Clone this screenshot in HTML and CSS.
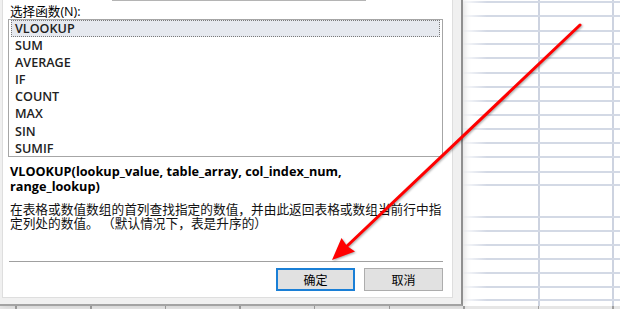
FILE: index.html
```html
<!DOCTYPE html>
<html lang="zh-CN">
<head>
  <meta charset="UTF-8">
  <title>插入函数</title>
  <link rel="stylesheet" href="styles.css">
</head>
<body>
  <div class="screen">
    <div class="top">
      <div class="dialog">
        <div class="panel">
          <div class="field-edge"></div>
          <div class="label">选择函数(N):</div>
          <ul class="listbox">
            <li class="item selected">VLOOKUP</li>
            <li class="item">SUM</li>
            <li class="item">AVERAGE</li>
            <li class="item">IF</li>
            <li class="item">COUNT</li>
            <li class="item">MAX</li>
            <li class="item">SIN</li>
            <li class="item">SUMIF</li>
          </ul>
          <div class="syntax">VLOOKUP(lookup_value, table_array, col_index_num, range_lookup)</div>
          <div class="desc">在表格或数值数组的首列查找指定的数值，并由此返回表格或数组当前行中指定列处的数值。 （默认情况下，表是升序的）</div>
          <div class="spacer"></div>
          <div class="separator"></div>
          <div class="buttons">
            <button class="btn default">确定</button>
            <button class="btn">取消</button>
          </div>
        </div>
      </div>

      <!-- worksheet behind the dialog -->
      <div class="sheet">
        <div class="row h3"></div>
        <div class="row h14"></div>
        <div class="row h15"></div>
        <div class="row h13"></div>
        <div class="row h14"></div>
        <div class="row h15"></div>
        <div class="row h14"></div>
        <div class="row h14"></div>
        <div class="row h14"></div>
        <div class="row h14"></div>
        <div class="row h14"></div>
        <div class="row h14"></div>
        <div class="row h15"></div>
        <div class="row h13"></div>
        <div class="row h32"></div>
        <div class="row h14"></div>
        <div class="row h14"></div>
        <div class="row h14"></div>
        <div class="row h14"></div>
        <div class="row h14"></div>
        <div class="row h13"></div>
      </div>
    </div>
    <div class="sheet-bottom"></div>

    <svg class="arrow" width="620" height="309" viewBox="0 0 620 309">
      <line x1="580" y1="25" x2="346" y2="247" stroke="#ff0000" stroke-width="3" stroke-linecap="round"/>
      <polygon points="332,260 341.5,238 347,246 355,251.5" fill="#ff0000"/>
    </svg>
  </div>
</body>
</html>
```

FILE: styles.css
```css
body {
  margin: 0;
  padding: 0;
  background: #ffffff;
  font-family: 'Open Sans', 'Noto Sans CJK SC', sans-serif;
  color: #000;
  overflow: hidden;
}

.screen {
  position: relative;
  width: 620px;
  height: 309px;
  display: flex;
  flex-direction: column;
}

.top {
  display: flex;
  height: 306px;
}

/* dialog frame */
.dialog {
  box-sizing: border-box;
  width: 463px;
  height: 306px;
  flex: none;
  background: #f0f0f0;
  border-right: 2px solid #8f8f8f;
  border-bottom: 2px solid #a3a3a3;
  padding: 0 8px 6px 2px;
  box-shadow: 2px 0 6px rgba(0, 0, 0, 0.12);
  z-index: 2;
}

.panel {
  box-sizing: border-box;
  height: 100%;
  background: #ffffff;
  border: 1px solid #dedede;
  border-top: none;
  padding: 0 9px 0 5px;
  display: flex;
  flex-direction: column;
}

.field-edge {
  height: 1px;
  width: 254px;
  margin-left: 104px;
  background: #b4b4b4;
}

.label {
  margin-top: 3px;
  height: 15px;
  line-height: 15px;
  font-size: 12.6px;
  padding-left: 2px;
}

.listbox {
  list-style: none;
  margin: 0;
  padding: 0 2px 0 2px;
  border: 1px solid #a6a6a6;
  height: 136px;
}

.item {
  box-sizing: border-box;
  height: 17.1px;
  line-height: 17px;
  font-size: 12.6px;
  font-weight: 600;
  padding-left: 4px;
  color: #222;
}

.item.selected {
  background: #e6e9ef;
  outline: 1px dotted #7a7a7a;
  outline-offset: -1px;
}

.syntax {
  margin-top: 7px;
  padding-left: 2px;
  font-size: 12.7px;
  font-weight: 700;
  line-height: 15px;
  width: 370px;
}

.desc {
  margin-top: 8px;
  padding-left: 2px;
  font-size: 12.7px;
  line-height: 14px;
  color: #111;
}

.spacer {
  flex: 1;
}

.separator {
  height: 1px;
  background: #a0a0a0;
  margin-left: 1px;
}

.buttons {
  display: flex;
  justify-content: flex-end;
  gap: 9px;
  margin: 6px 0 6px 0;
}

.btn {
  box-sizing: border-box;
  width: 79px;
  height: 23px;
  background: #e1e1e1;
  border: 1px solid #adadad;
  font-family: 'Noto Sans CJK SC', sans-serif;
  font-size: 12px;
  color: #000;
  padding: 0;
}

.btn.default {
  border: 2px solid #1a7fd6;
}

/* worksheet */
.sheet {
  position: relative;
  flex: 1;
  background-image:
    linear-gradient(to right, transparent 75px, #cdd3e0 75px, #cdd3e0 77px, transparent 77px),
    linear-gradient(to right, transparent 149px, #cdd3e0 149px, #cdd3e0 151px, transparent 151px);
}

.sheet::after {
  content: '';
  position: absolute;
  top: 0;
  left: 0;
  bottom: 0;
  width: 24px;
  background: linear-gradient(to right, rgba(255, 255, 255, 0.95), rgba(255, 255, 255, 0));
}

.row {
  box-sizing: border-box;
  border-bottom: 2px solid #d3d9e5;
}

.h3 { height: 3px; }
.h13 { height: 13px; }
.h14 { height: 14px; }
.h15 { height: 15px; }
.h32 { height: 32px; }

.sheet-bottom {
  height: 3px;
  background-color: #e6e6e6;
  background-image: repeating-linear-gradient(to right, transparent 0, transparent 15.5px, #9f9f9f 15.5px, #9f9f9f 17px, transparent 17px, transparent 74.6px);
}

/* red annotation arrow */
.arrow {
  position: absolute;
  top: 0;
  left: 0;
  z-index: 10;
  pointer-events: none;
  filter: drop-shadow(1px 1px 1px rgba(0, 0, 0, 0.35));
}
```
